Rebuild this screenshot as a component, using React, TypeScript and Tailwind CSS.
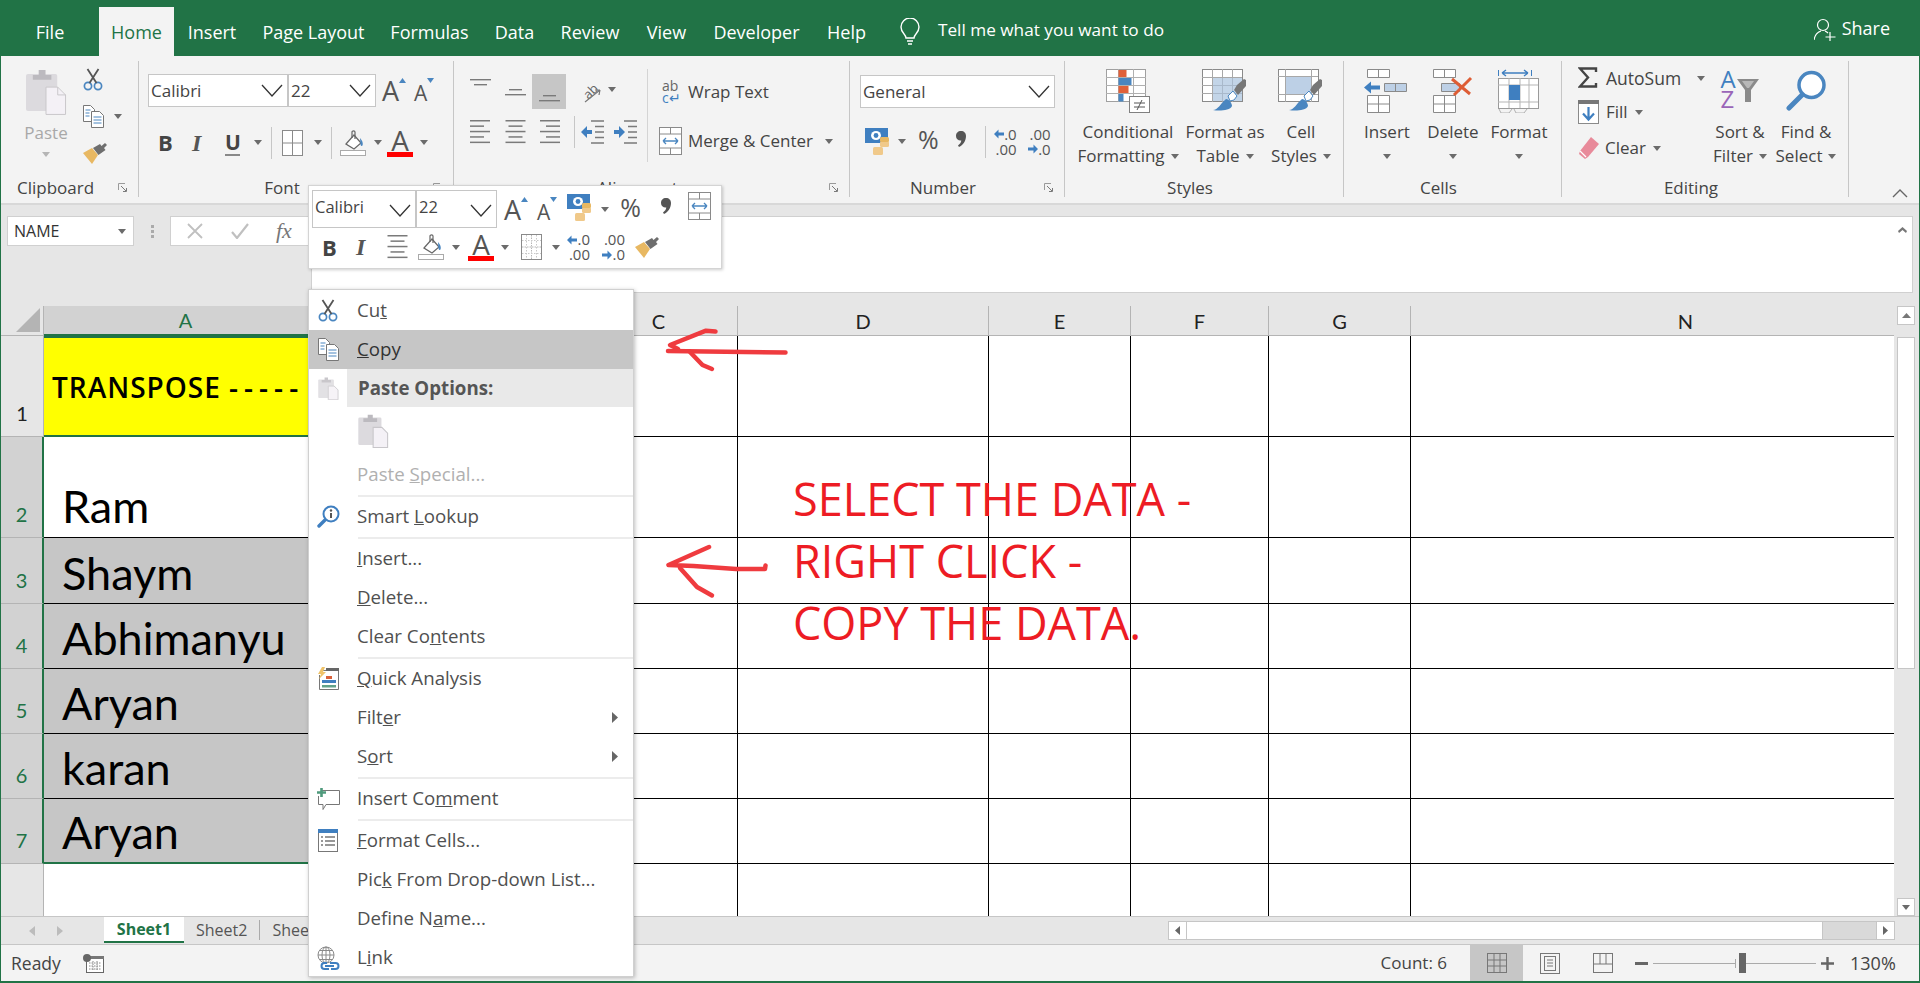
import type { ReactNode } from "react";

function Caret({ c = "#6b6b6b" }: { c?: string }) {
  return (
    <svg width="8" height="5" viewBox="0 0 8 5" className="shrink-0">
      <path d="M0 0h8L4 5z" fill={c} />
    </svg>
  );
}

function Chevron() {
  return (
    <svg width="22" height="13" viewBox="0 0 22 13" className="shrink-0">
      <path d="M1 1l10 11L21 1" fill="none" stroke="#333" strokeWidth="1.3" />
    </svg>
  );
}

function Launcher() {
  return (
    <svg width="10" height="10" viewBox="0 0 10 10" className="shrink-0">
      <path d="M.5 7V.5H7" fill="none" stroke="#9a9a9a" />
      <path d="M3 3l5 5M5 8.5h3.5V5" fill="none" stroke="#7a7a7a" />
    </svg>
  );
}

function PasteIcon() {
  return (
    <svg width="41" height="46" viewBox="0 0 42 47">
      <rect x="0" y="5" width="32" height="38" rx="2" fill="#dcdade" />
      <path d="M7 6h6V1h7v5h6v5H7z" fill="#bcbabf" />
      <path d="M20.5 18.5h12l8 8v20h-20z" fill="#f4f1f6" stroke="#c8c6ca" />
      <path d="M32.5 18.5v8h8" fill="none" stroke="#c8c6ca" />
    </svg>
  );
}

function Scissors() {
  return (
    <svg width="20" height="23" viewBox="0 0 20 23">
      <circle cx="5" cy="18" r="3.6" fill="none" stroke="#4a86c0" strokeWidth="1.7" />
      <circle cx="15" cy="18" r="3.6" fill="none" stroke="#4a86c0" strokeWidth="1.7" />
      <path d="M6.5 15L15.5 1M13.5 15L4.5 1" stroke="#555" strokeWidth="1.8" />
    </svg>
  );
}

function CopyIcon() {
  return (
    <svg width="21" height="23" viewBox="0 0 21 23">
      <path d="M.5.5h7l4 4v12H.5z" fill="#fff" stroke="#777" />
      <path d="M8.500 6.500h8l4 4v12h-12z" fill="#fff" stroke="#777" />
      <path d="M2.500 5h5M2.500 8h4M2.500 11h4M10.500 12h8M10.500 15h8M10.500 18h8" stroke="#4a86c0" />
    </svg>
  );
}

function Brush() {
  return (
    <svg width="24" height="22" viewBox="0 0 24 22">
      <path d="M0 11l9-5 6 7-6 9z" fill="#e8b862" />
      <path d="M10 6l7-4 1.500 2L22 1l2 2-3 3 1.500 2-7 5z" fill="#6e6e6e" />
    </svg>
  );
}

function GridBox({ dotted }: { dotted?: boolean }) {
  return (
    <svg width="21" height="26" viewBox="0 0 21 26">
      <rect x=".5" y=".5" width="20" height="25" fill="#fff" stroke="#8a8a8a" />
      <path
        d="M10.500 1v24M1 13h19"
        stroke={dotted ? "#b5b5b5" : "#8a8a8a"}
        strokeDasharray={dotted ? "1.5 1" : undefined}
      />
      {dotted && <path d="M1 6.500h19M5.500 1v24M15.500 1v24M1 19.500h19" stroke="#c8c8c8" strokeDasharray="1.5 1.5" />}
    </svg>
  );
}

function FillIcon() {
  return (
    <svg width="26" height="26" viewBox="0 0 26 26">
      <path d="M6 14l8-9 7 8-7 6z" fill="#fff" stroke="#666" strokeWidth="1.2" />
      <path d="M12 8V2c0-1.500 3-1.500 3 0v7" fill="none" stroke="#666" strokeWidth="1.2" />
      <path d="M20 8c3 3 3.500 7 2 8-2 .5-1.500-4-2-8z" fill="#4a86c0" />
      <rect x=".5" y="20.500" width="25" height="5" fill="#fff" stroke="#aaa" />
    </svg>
  );
}

function FontColor() {
  return (
    <div className="flex h-[28px] w-[26px] flex-col items-center">
      <span className="font-['Open_Sans'] text-[28px] leading-[23px] text-[#555]">A</span>
      <span className="mt-auto h-[7px] w-full bg-[#ff0000]" />
    </div>
  );
}

function GrowA({ up, small }: { up: boolean; small?: boolean }) {
  return (
    <div className="flex items-start">
      <span
        className={`font-['Open_Sans'] leading-none text-[#555] ${small ? "mt-[6px] text-[21px]" : "text-[27px]"}`}
      >
        A
      </span>
      <svg width="7" height="5" viewBox="0 0 7 5" className="mt-[1px]">
        <path d={up ? "M0 5h7L3.500 0z" : "M0 0h7L3.500 5z"} fill="#4a86c0" />
      </svg>
    </div>
  );
}

function AlignLines({ widths }: { widths: number[] }) {
  const h = widths.length * 5;
  return (
    <svg width="21" height={h} viewBox={`0 0 21 ${h}`}>
      {widths.map((w, i) => (
        <rect key={i} x={(21 - w) / 2} y={i * 5} width={w} height="1.4" fill="#7a7a7a" />
      ))}
    </svg>
  );
}

function AlignBlock({ kind }: { kind: "l" | "c" | "r" | "m" }) {
  const rows = kind === "m" ? [20, 14, 20, 14, 20] : [20, 14, 20, 14, 20];
  return (
    <svg width="21" height="26" viewBox="0 0 21 26">
      {rows.map((w, i) => {
        const x = kind === "l" ? 0 : kind === "r" ? 21 - w : (21 - w) / 2;
        return <rect key={i} x={x} y={i * 5.4 + 1} width={w} height="1.5" fill="#7a7a7a" />;
      })}
    </svg>
  );
}

function Indent({ inward }: { inward?: boolean }) {
  return (
    <svg width="23" height="26" viewBox="0 0 23 26">
      <path d="M10 2h13M14 7.500h9M14 13h9M14 18.500h9M10 24h13" stroke="#7a7a7a" strokeWidth="1.5" />
      {inward ? (
        <path d="M11 13L5 7v4H0v4h5v4z" fill="#3f7fc0" />
      ) : (
        <path d="M0 13l6-6v4h5v4H6v4z" fill="#3f7fc0" />
      )}
    </svg>
  );
}

function Orientation() {
  return (
    <div className="relative flex h-[26px] w-[20px] items-center justify-center">
      <span className="-rotate-45 font-['Open_Sans'] text-[13px] leading-none text-[#666]">ab</span>
      <svg width="20" height="26" viewBox="0 0 20 26" className="absolute inset-0">
        <path d="M4 24L19 12M19 12l-5 0M19 12l-1 5" stroke="#777" fill="none" strokeWidth="1.2" />
      </svg>
    </div>
  );
}

function MergeIcon() {
  return (
    <svg width="23" height="28" viewBox="0 0 23 28">
      <rect x=".5" y=".5" width="22" height="27" fill="#fff" stroke="#8a8a8a" />
      <path d="M1 7h21M1 21h21M11.500 1v6M11.500 21v6" stroke="#8a8a8a" />
      <path d="M4 14h15M4 14l3-3M4 14l3 3M19 14l-3-3M19 14l-3 3" stroke="#4a86c0" strokeWidth="1.3" fill="none" />
    </svg>
  );
}

function Currency() {
  return (
    <svg width="25" height="27" viewBox="0 0 25 27">
      <rect x="0" y="0" width="23" height="15" fill="#3f7fc0" />
      <ellipse cx="11" cy="7.500" rx="5" ry="4.500" fill="#fff" />
      <circle cx="11" cy="7.500" r="2.400" fill="#3f7fc0" />
      <rect x="15" y="13" width="9" height="6" rx="1.500" fill="#f0c98a" />
      <rect x="15" y="9" width="9" height="5" rx="1.500" fill="#e8b862" />
      <rect x="8" y="19" width="10" height="8" rx="1.500" fill="#f0c98a" />
    </svg>
  );
}

function Comma() {
  return (
    <svg width="10" height="16" viewBox="0 0 10 16">
      <path d="M5 0c3 0 5 2 5 5 0 5-3 9-7 11l-1-1.500c2-1.500 3-3 3.300-5C2.300 9.800 0 8 0 5c0-3 2-5 5-5z" fill="#555" />
    </svg>
  );
}

function Arrow({ right }: { right?: boolean }) {
  return (
    <svg width="10" height="10" viewBox="0 0 10 10" className="shrink-0" style={right ? { transform: "scaleX(-1)" } : undefined}>
      <path d="M0 5l4.500-4.500v3H10v3H4.500v3z" fill="#3f7fc0" />
    </svg>
  );
}

function Decimal({ more }: { more?: boolean }) {
  return (
    <div className="flex w-[23px] flex-col font-['Open_Sans'] text-[15px] leading-[15px] text-[#555]">
      {more ? (
        <>
          <div className="flex items-center justify-end">
            <Arrow />
            <span>.0</span>
          </div>
          <span className="text-right">.00</span>
        </>
      ) : (
        <>
          <span className="text-right">.00</span>
          <div className="flex items-center justify-end">
            <Arrow right />
            <span>.0</span>
          </div>
        </>
      )}
    </div>
  );
}

function Percent() {
  return <span className="font-['Open_Sans'] text-[25px] leading-none text-[#555]">%</span>;
}

function CondFormat() {
  return (
    <svg width="45" height="45" viewBox="0 0 45 45">
      <rect x=".5" y=".5" width="39" height="32" fill="#fff" stroke="#a0a0a0" />
      <path d="M0 8.500h40M0 16.500h40M0 24.500h40M12.500 0v33M27.500 0v33" stroke="#b0b0b0" />
      <rect x="12.500" y="1" width="8" height="7" fill="#e0613a" />
      <rect x="12.500" y="9" width="13" height="7" fill="#4a86c0" />
      <rect x="12.500" y="17" width="10" height="7" fill="#e0613a" />
      <rect x="12.500" y="25" width="5" height="7.500" fill="#4a86c0" />
      <rect x="23.500" y="27.500" width="20" height="16" fill="#fff" stroke="#808080" />
      <path d="M28 34h11M28 38h11M36 31l-5 10" stroke="#555" />
    </svg>
  );
}

function TableBrush({ full }: { full?: boolean }) {
  return (
    <svg width="46" height="44" viewBox="0 0 46 44">
      <rect x=".5" y=".5" width="40" height="32" fill="#fff" stroke="#8a8a8a" />
      {full ? (
        <>
          <path d="M0 7.500h40M7.500 0v33M33.500 0v33M0 25.500h40" stroke="#a8a8a8" />
          <rect x="8" y="8" width="25" height="17" fill="#bdd0e6" />
        </>
      ) : (
        <>
          <path d="M0 8.500h40M0 16.500h40M0 24.500h40M10.500 0v33M20.500 0v33M30.500 0v33" stroke="#a8a8a8" />
          <rect x="11" y="9" width="29" height="23" fill="#bdd0e6" opacity=".9" />
          <path d="M20.500 9v23M30.500 9v23M11 16.500h29M11 24.500h29" stroke="#a9b9cb" />
        </>
      )}
      <path d="M35 16l7-6 2 1v6l-8 9-4-5z" fill="#777" />
      <path d="M26 27l5-5 4 5-3 4-4 1z" fill="#fff" stroke="#4a86c0" />
      <path d="M11 41c5 0 7-6 13-11 3 0 6 4 6 7-2 5-14 5-19 4z" fill="#4a86c0" />
    </svg>
  );
}

function CellsIcon({ kind }: { kind: "insert" | "delete" }) {
  return (
    <svg width="46" height="44" viewBox="0 0 46 44">
      <path d="M3.500.5h22v8h-22zM14.500 0v8M3.500 26.500h22v17h-22zM3.500 35h22M14.500 26v17" fill="#fff" stroke="#8a8a8a" />
      {kind === "insert" ? (
        <>
          <path d="M20.500 14.500h22v8h-22z" fill="#bdd0e6" stroke="#8a8a8a" />
          <path d="M31.500 14v9" stroke="#8a8a8a" />
          <path d="M0 18.500l7-6v4h9v4H7v4z" fill="#3f7fc0" />
        </>
      ) : (
        <>
          <path d="M11.500 14.500h18v8h-18z" fill="#bdd0e6" stroke="#8a8a8a" />
          <path d="M22 10l18 15M41 9L24 26" stroke="#de5d35" strokeWidth="3" />
        </>
      )}
    </svg>
  );
}

function FormatCellsIcon() {
  return (
    <svg width="42" height="44" viewBox="0 0 42 44">
      <path d="M.5 1v6M33.500 1v6" stroke="#3f7fc0" />
      <path d="M4 4h26M4 4l4-3M4 4l4 3M30 4l-4-3M30 4l-4 3" stroke="#3f7fc0" strokeWidth="1.4" fill="none" />
      <rect x=".5" y="9.500" width="40" height="30" fill="#fff" stroke="#9a9a9a" />
      <path d="M0 16h40M0 33h40M11 9v30M22 9v30M31 9v30" stroke="#b5b5b5" />
      <rect x="11" y="16" width="11" height="15" fill="#3f7fc0" />
      <path d="M1 40l2 4h8l3-4M16 40l2 4h8l3-4" fill="none" stroke="#b0b0b0" />
    </svg>
  );
}

function StackBtn({ icon, l1, l2, w }: { icon: ReactNode; l1: string; l2?: string; w: string }) {
  return (
    <div className={`flex flex-col items-center ${w}`}>
      <div className="flex h-[59px] justify-center pt-[8px]">{icon}</div>
      <span className="block whitespace-nowrap text-center leading-[24px]">{l1}</span>
      {l2 ? (
        <div className="flex h-[24px] items-center justify-center gap-[6px]">
          <span>{l2}</span>
          <Caret />
        </div>
      ) : (
        <div className="flex h-[24px] items-center justify-center">
          <Caret />
        </div>
      )}
    </div>
  );
}

function Group({ w, label, launcher, children }: { w: string; label: string; launcher?: boolean; children: ReactNode }) {
  return (
    <div className={`my-[5px] flex h-[136px] shrink-0 flex-col border-r border-[#c6c6c6] ${w}`}>
      <div className="h-[117px] overflow-hidden">{children}</div>
      <div className="flex h-[19px] items-center">
        <span className="flex-1 text-center text-[#444]">{label}</span>
        <span className="flex w-[28px] justify-start pl-[8px]">{launcher && <Launcher />}</span>
      </div>
    </div>
  );
}

function Combo({ w, text }: { w: string; text: string }) {
  return (
    <div className={`flex h-[33px] items-center justify-between border border-[#c6c6c6] bg-white pl-[2px] pr-[4px] ${w}`}>
      <span className="text-[#444]">{text}</span>
      <Chevron />
    </div>
  );
}

function Ribbon() {
  return (
    <div className="flex h-[147px] bg-[#f3f3f3] text-[#444]">
      <Group w="w-[138px]" label="Clipboard" launcher>
        <div className="flex">
          <div className="ml-[24px] flex w-[42px] flex-col items-center pt-[8px] text-[#a8a8a8]">
            <PasteIcon />
            <span className="mt-[6px] leading-[24px]">Paste</span>
            <div className="mt-[7px]">
              <Caret c="#b5b5b5" />
            </div>
          </div>
          <div className="ml-[16px] flex flex-col pt-[7px]">
            <Scissors />
            <div className="mt-[14px] flex items-center">
              <CopyIcon />
              <span className="ml-[10px]">
                <Caret />
              </span>
            </div>
            <div className="mt-[14px]">
              <Brush />
            </div>
          </div>
        </div>
      </Group>

      <Group w="w-[315px]" label="Font" launcher>
        <div className="flex items-center pl-[9px] pt-[13px]">
          <Combo w="w-[140px]" text="Calibri" />
          <Combo w="w-[88px]" text="22" />
          <span className="ml-[6px]">
            <GrowA up />
          </span>
          <span className="ml-[8px]">
            <GrowA up={false} small />
          </span>
        </div>
        <div className="mt-[19px] flex h-[33px] items-center pl-[19px]">
          <span className="w-[14px] font-['Open_Sans'] text-[22px] font-bold text-[#444]">B</span>
          <span className="ml-[20px] w-[12px] font-['Liberation_Serif'] text-[24px] font-bold italic text-[#555]">I</span>
          <span className="ml-[21px] w-[15px] border-b-2 border-[#888] font-['Open_Sans'] text-[21px] font-bold leading-[24px] text-[#444]">U</span>
          <span className="ml-[14px]">
            <Caret />
          </span>
          <span className="ml-[9px] h-[32px] w-px bg-[#c6c6c6]" />
          <span className="ml-[10px]">
            <GridBox />
          </span>
          <span className="ml-[11px]">
            <Caret />
          </span>
          <span className="ml-[9px] h-[32px] w-px bg-[#c6c6c6]" />
          <span className="ml-[8px]">
            <FillIcon />
          </span>
          <span className="ml-[8px]">
            <Caret />
          </span>
          <span className="ml-[5px]">
            <FontColor />
          </span>
          <span className="ml-[7px]">
            <Caret />
          </span>
        </div>
      </Group>

      <Group w="w-[396px]" label="Alignment" launcher>
        <div className="flex">
          <div className="mt-[8px] h-[93px] w-[194px] border-r border-[#d4d4d4]">
            <div className="flex h-[40px] items-start pl-[16px]">
              <span className="mt-[10px]">
                <AlignLines widths={[21, 13]} />
              </span>
              <span className="ml-[14px] mt-[20px]">
                <AlignLines widths={[13, 21]} />
              </span>
              <span className="ml-[6px] mt-[5px] flex h-[35px] w-[34px] items-end justify-center bg-[#c6c6c6] pb-[4px]">
                <AlignLines widths={[13, 21]} />
              </span>
              <span className="ml-[15px] mt-[9px]">
                <Orientation />
              </span>
              <span className="ml-[7px] mt-[18px]">
                <Caret />
              </span>
            </div>
            <div className="mt-[6px] flex h-[33px] items-center pl-[16px]">
              <AlignBlock kind="l" />
              <span className="ml-[14px]">
                <AlignBlock kind="c" />
              </span>
              <span className="ml-[13px]">
                <AlignBlock kind="r" />
              </span>
              <span className="ml-[14px] h-[32px] w-px bg-[#c6c6c6]" />
              <span className="ml-[6px]">
                <Indent />
              </span>
              <span className="ml-[10px]">
                <Indent inward />
              </span>
            </div>
          </div>
          <div className="flex flex-col pl-[11px] pt-[13px]">
            <div className="flex h-[36px] items-center">
              <div className="flex w-[29px] flex-col pl-[3px] font-['Open_Sans'] text-[14px] leading-[12px] text-[#666]">
                <span>ab</span>
                <span className="text-[#3f7fc0]">c↵</span>
              </div>
              <span>Wrap Text</span>
            </div>
            <div className="mt-[13px] flex h-[36px] items-center">
              <MergeIcon />
              <span className="ml-[6px]">Merge &amp; Center</span>
              <span className="ml-[12px]">
                <Caret />
              </span>
            </div>
          </div>
        </div>
      </Group>

      <Group w="w-[215px]" label="Number" launcher>
        <div className="pl-[10px] pt-[14px]">
          <div className="flex h-[33px] w-[195px] items-center justify-between border border-[#c6c6c6] bg-white pl-[2px] pr-[4px]">
            <span>General</span>
            <Chevron />
          </div>
          <div className="mt-[17px] flex h-[33px] items-center pl-[5px]">
            <Currency />
            <span className="ml-[8px]">
              <Caret />
            </span>
            <span className="ml-[12px]">
              <Percent />
            </span>
            <span className="ml-[17px] -mt-[6px]">
              <Comma />
            </span>
            <span className="ml-[19px] h-[32px] w-px bg-[#c6c6c6]" />
            <span className="ml-[8px]">
              <Decimal more />
            </span>
            <span className="ml-[11px]">
              <Decimal />
            </span>
          </div>
        </div>
      </Group>

      <Group w="w-[279px]" label="Styles">
        <div className="flex pl-[5px]">
          <StackBtn w="w-[116px]" icon={<CondFormat />} l1="Conditional" l2="Formatting" />
          <StackBtn w="w-[78px]" icon={<TableBrush />} l1="Format as" l2="Table" />
          <StackBtn w="w-[74px]" icon={<TableBrush full />} l1="Cell" l2="Styles" />
        </div>
      </Group>

      <Group w="w-[218px]" label="Cells">
        <div className="flex pl-[11px]">
          <StackBtn w="w-[64px]" icon={<CellsIcon kind="insert" />} l1="Insert" />
          <StackBtn w="w-[68px]" icon={<CellsIcon kind="delete" />} l1="Delete" />
          <StackBtn w="w-[64px]" icon={<FormatCellsIcon />} l1="Format" />
        </div>
      </Group>

      <Group w="w-[287px]" label="Editing">
        <div className="flex">
          <div className="flex w-[145px] flex-col pl-[16px]">
            <div className="flex h-[34px] items-center">
              <svg width="20" height="22" viewBox="0 0 20 22">
                <path d="M18 5V1.500H2l8 9-8 9h16V16" fill="none" stroke="#444" strokeWidth="2.4" />
              </svg>
              <span className="ml-[8px] text-[17.5px]">AutoSum</span>
              <span className="ml-[16px]">
                <Caret />
              </span>
            </div>
            <div className="flex h-[34px] items-center">
              <svg width="21" height="24" viewBox="0 0 21 24">
                <rect x=".5" y=".5" width="20" height="23" fill="#fff" stroke="#8a8a8a" />
                <rect x="0" y="0" width="21" height="4" fill="#777" />
                <path d="M10.500 7v12M5 13.500l5.500 6 5.500-6" stroke="#3f7fc0" strokeWidth="2.2" fill="none" />
              </svg>
              <span className="ml-[7px]">Fill</span>
              <span className="ml-[7px]">
                <Caret />
              </span>
            </div>
            <div className="flex h-[38px] items-center">
              <svg width="21" height="22" viewBox="0 0 21 22">
                <path d="M13 0l8 7-11 13-3 2-6-5 1-3z" fill="#e88a9a" />
                <path d="M2 14l6 6" stroke="#fff" strokeWidth="1.2" />
              </svg>
              <span className="ml-[6px]">Clear</span>
              <span className="ml-[7px]">
                <Caret />
              </span>
            </div>
          </div>
          <StackBtn
            w="w-[66px]"
            icon={
              <div className="flex">
                <div className="flex flex-col font-['Open_Sans'] text-[24px] font-normal leading-[20px]">
                  <span className="text-[#3f7fc0]">A</span>
                  <span className="text-[#9a65b8]">Z</span>
                </div>
                <svg width="24" height="26" viewBox="0 0 24 26" className="mt-[9px]">
                  <path d="M1 1h22l-8 11v12h-6V12z" fill="#8a8a8a" />
                  <path d="M6 3h12l-5 7h-2z" fill="#b8b8b8" />
                </svg>
              </div>
            }
            l1="Sort &"
            l2="Filter"
          />
          <StackBtn
            w="w-[66px]"
            icon={
              <svg width="40" height="42" viewBox="0 0 40 42" className="mt-px">
                <circle cx="25.500" cy="15" r="12.500" fill="#fff" stroke="#4a86c0" strokeWidth="3.500" />
                <path d="M16 25L3 38" stroke="#4a86c0" strokeWidth="5" strokeLinecap="round" />
              </svg>
            }
            l1="Find &"
            l2="Select"
          />
        </div>
      </Group>

      <div className="flex flex-1 items-end justify-end pb-[5px] pr-[11px]">
        <svg width="16" height="9" viewBox="0 0 16 9">
          <path d="M1 8l7-7 7 7" fill="none" stroke="#666" strokeWidth="1.4" />
        </svg>
      </div>
    </div>
  );
}

function FormulaBar() {
  return (
    <div className="flex h-[103px] border-t-2 border-[#d8d8d8] bg-[#e6e6e6] pt-[11px] text-[#444]">
      <div className="ml-[6px] flex h-[30px] w-[127px] items-center justify-between border border-[#d0d0d0] bg-white pl-[6px] pr-[7px] text-[16px] text-[#333]">
        <span>NAME</span>
        <Caret />
      </div>
      <div className="ml-[17px] mr-[16px] flex h-[30px] flex-col justify-center gap-[2px]">
        <span className="h-[3px] w-[3px] bg-[#aaa]" />
        <span className="h-[3px] w-[3px] bg-[#aaa]" />
        <span className="h-[3px] w-[3px] bg-[#aaa]" />
      </div>
      <div className="flex h-[30px] w-[141px] shrink-0 items-center border border-[#d0d0d0] bg-white pl-[16px]">
        <svg width="16" height="16" viewBox="0 0 16 16">
          <path d="M1 1l14 14M15 1L1 15" stroke="#c0c0c0" strokeWidth="1.8" />
        </svg>
        <svg width="18" height="16" viewBox="0 0 18 16" className="ml-[28px]">
          <path d="M1 9l5 6L17 1" stroke="#c0c0c0" strokeWidth="2.2" fill="none" />
        </svg>
        <span className="ml-[27px] font-['Liberation_Serif'] text-[22px] italic leading-none text-[#777]">fx</span>
      </div>
      <div className="flex h-[77px] flex-1 justify-end border border-[#d0d0d0] bg-white pr-[5px] pt-[10px]">
        <svg width="9" height="6" viewBox="0 0 9 6">
          <path d="M4.500 0L9 4 8 6 4.500 3 1 6 0 4z" fill="#777" />
        </svg>
      </div>
      <div className="w-[6px]" />
    </div>
  );
}

const colNames = ["A", "B", "C", "D", "E", "F", "G", "N"];
const rows: { n: number; name?: string }[] = [
  { n: 1 },
  { n: 2, name: "Ram" },
  { n: 3, name: "Shaym" },
  { n: 4, name: "Abhimanyu" },
  { n: 5, name: "Aryan" },
  { n: 6, name: "karan" },
  { n: 7, name: "Aryan" },
  { n: 8 },
];

function SheetGrid() {
  return (
    <div className="grid h-[610px] w-[1893px] shrink-0 grid-cols-[43px_284px_252px_158px_251px_142px_138px_142px_550px] grid-rows-[30px_101px_101px_66px_65px_65px_65px_65px_65px] overflow-hidden bg-white font-['Lato']">
      <div className="flex items-end justify-end border-b border-r border-[#b4b4b4] bg-[#e6e6e6] pb-[3px] pr-[3px]">
        <svg width="24" height="24" viewBox="0 0 24 24">
          <path d="M24 0v24H0z" fill="#b4b4b4" />
        </svg>
      </div>
      {colNames.map((c) => (
        <div
          key={c}
          className={
            c === "A"
              ? "flex items-center justify-center border-b-2 border-r border-b-[#217346] border-r-[#b4b4b4] bg-[#d2d2d2] text-[20px] text-[#217346]"
              : "flex items-center justify-center border-b border-r border-[#b4b4b4] bg-[#e6e6e6] text-[20px] text-[#222]"
          }
        >
          {c}
        </div>
      ))}
      {rows.map((r) => {
        const selected = r.n >= 2 && r.n <= 7;
        return [
          <div
            key={`h${r.n}`}
            className={
              selected
                ? "flex items-end justify-center border-b border-r-2 border-b-[#b4b4b4] border-r-[#217346] bg-[#d2d2d2] pb-[11px] text-[20px] leading-[24px] text-[#217346]"
                : "flex items-end justify-center border-b border-r border-[#b4b4b4] bg-[#e6e6e6] pb-[11px] text-[20px] leading-[24px] text-[#222]"
            }
          >
            {r.n <= 7 ? r.n : ""}
          </div>,
          <div
            key={`a${r.n}`}
            className={
              r.n === 1
                ? "flex items-center whitespace-pre border-y-2 border-[#217346] bg-[#ffff00] pl-[8px] font-['Open_Sans'] text-[28px] font-semibold tracking-[1px] text-black"
                : r.n === 2
                  ? "flex items-end border-b border-black bg-white pb-[5px] pl-[18px] text-[45px] leading-[52px] text-black"
                  : r.n === 7
                    ? "flex items-end border-b-2 border-[#217346] bg-[#c6c6c6] pb-[4px] pl-[18px] text-[45px] leading-[52px] text-black"
                    : selected
                      ? "flex items-end border-b border-black bg-[#c6c6c6] pb-[4px] pl-[18px] text-[45px] leading-[52px] text-black"
                      : "border-b border-black bg-white"
            }
          >
            {r.n === 1 ? (
              <>
                TRANSPOSE <span className="tracking-[6px]">-----</span>
              </>
            ) : (
              r.name
            )}
          </div>,
          ...["B", "C", "D", "E", "F", "G", "N"].map((c) => (
            <div key={`${c}${r.n}`} className="border-b border-r border-black bg-white" />
          )),
        ];
      })}
    </div>
  );
}

function VScroll() {
  return (
    <div className="ml-[3px] flex h-[610px] w-[18px] shrink-0 flex-col bg-[#e6e6e6]">
      <div className="flex h-[19px] items-center justify-center border border-[#c6c6c6] bg-white">
        <svg width="9" height="5" viewBox="0 0 9 5">
          <path d="M0 5h9L4.500 0z" fill="#777" />
        </svg>
      </div>
      <div className="mt-[12px] h-[332px] border border-[#c6c6c6] bg-white" />
      <div className="flex-1" />
      <div className="flex h-[18px] items-center justify-center border border-[#c6c6c6] bg-white">
        <Caret />
      </div>
    </div>
  );
}

function TabBar() {
  return (
    <div className="flex h-[29px] border-y border-[#c6c6c6] bg-[#e6e6e6] text-[16px] text-[#555]">
      <div className="flex w-[103px] items-center pl-[28px]">
        <svg width="6" height="10" viewBox="0 0 6 10">
          <path d="M6 0v10L0 5z" fill="#bcbcbc" />
        </svg>
        <svg width="6" height="10" viewBox="0 0 6 10" className="ml-[22px]">
          <path d="M0 0v10l6-5z" fill="#bcbcbc" />
        </svg>
      </div>
      <div className="flex h-[26px] w-[80px] items-center justify-center border-b-2 border-[#217346] bg-white font-bold text-[#217346]">
        Sheet1
      </div>
      <span className="ml-[12px] flex h-[26px] items-center">Sheet2</span>
      <span className="ml-[12px] mt-[3px] h-[20px] w-px bg-[#aaa]" />
      <span className="ml-[12px] flex h-[26px] items-center">Sheet3</span>
      <div className="ml-auto mt-[4px] flex h-[19px] w-[727px] border border-[#c6c6c6] bg-[#d9d9d9]">
        <div className="flex w-[18px] items-center justify-center border-r border-[#c6c6c6] bg-white">
          <svg width="5" height="9" viewBox="0 0 5 9">
            <path d="M5 0v9L0 4.500z" fill="#666" />
          </svg>
        </div>
        <div className="w-[636px] border-r border-[#c6c6c6] bg-white" />
        <div className="flex-1" />
        <div className="flex w-[18px] items-center justify-center border-l border-[#c6c6c6] bg-white">
          <svg width="5" height="9" viewBox="0 0 5 9">
            <path d="M0 0v9l5-4.500z" fill="#666" />
          </svg>
        </div>
      </div>
      <div className="w-[24px]" />
    </div>
  );
}

function StatusBar() {
  return (
    <div className="flex h-[36px] items-center bg-[#f3f3f3] text-[#444]">
      <span className="ml-[10px] w-[72px] text-[17.5px]">Ready</span>
      <svg width="21" height="19" viewBox="0 0 21 19">
        <rect x="3.500" y="3.500" width="17" height="15" fill="#fff" stroke="#666" />
        <path d="M6 9h12M6 12h12M6 15h12M10 7v10M14 7v10" stroke="#888" strokeDasharray="1.5 1" />
        <rect x="4" y="2" width="17" height="3" fill="#777" />
        <circle cx="4" cy="4" r="4" fill="#666" />
      </svg>
      <span className="ml-auto">Count: 6</span>
      <div className="ml-[23px] flex h-[36px] w-[53px] items-center justify-center bg-[#c6c6c6]">
        <svg width="20" height="20" viewBox="0 0 20 20">
          <rect x=".5" y=".5" width="19" height="19" fill="none" stroke="#777" />
          <path d="M7 0v20M13 0v20M0 7h20M0 13h20" stroke="#777" />
        </svg>
      </div>
      <svg width="20" height="21" viewBox="0 0 20 21" className="ml-[17px]">
        <rect x=".5" y=".5" width="19" height="20" fill="none" stroke="#777" />
        <rect x="4.500" y="3.500" width="11" height="14" fill="none" stroke="#777" />
        <path d="M7 7h6M7 10h6M7 13h6" stroke="#777" />
      </svg>
      <svg width="20" height="20" viewBox="0 0 20 20" className="ml-[33px]">
        <rect x=".5" y=".5" width="19" height="19" fill="none" stroke="#777" />
        <path d="M7 0v11h6V0M0 11h7M13 11h7" fill="none" stroke="#777" />
      </svg>
      <span className="ml-[22px] h-[3px] w-[13px] bg-[#666]" />
      <div className="ml-[5px] flex h-[20px] w-[163px] items-center">
        <span className="h-px w-[82px] bg-[#aaa]" />
        <span className="h-[9px] w-px bg-[#aaa]" />
        <span className="ml-[3px] h-[20px] w-[7px] bg-[#666]" />
        <span className="h-px flex-1 bg-[#aaa]" />
      </div>
      <svg width="13" height="13" viewBox="0 0 13 13" className="ml-[5px]">
        <path d="M0 6.500h13M6.500 0v13" stroke="#666" strokeWidth="2.4" />
      </svg>
      <span className="ml-[16px] w-[49px] whitespace-nowrap text-[18px]">130%</span>
      <span className="w-[20px]" />
    </div>
  );
}

function MiniToolbar() {
  return (
    <div className="absolute left-[308px] top-[185px] z-20 h-[84px] w-[414px] border border-[#d4d4d4] bg-white pl-[3px] pt-[4px] text-[16.5px] text-[#444] shadow-[1px_1px_3px_rgba(0,0,0,0.2)]">
      <div className="flex h-[38px] items-center">
        <div className="flex h-[38px] w-[104px] items-center justify-between border border-[#c6c6c6] pb-[4px] pl-[2px] pr-[4px]">
          <span>Calibri</span>
          <span className="mt-[6px]">
            <Chevron />
          </span>
        </div>
        <div className="flex h-[38px] w-[81px] items-center justify-between border border-[#c6c6c6] pb-[4px] pl-[2px] pr-[4px]">
          <span>22</span>
          <span className="mt-[6px]">
            <Chevron />
          </span>
        </div>
        <span className="ml-[7px]">
          <GrowA up />
        </span>
        <span className="ml-[9px]">
          <GrowA up={false} small />
        </span>
        <span className="ml-[10px] -mt-[4px]">
          <Currency />
        </span>
        <span className="ml-[9px]">
          <Caret />
        </span>
        <span className="ml-[11px]">
          <Percent />
        </span>
        <span className="ml-[20px] -mt-[6px]">
          <Comma />
        </span>
        <span className="ml-[17px] -mt-[6px]">
          <MergeIcon />
        </span>
      </div>
      <div className="mt-[1px] flex h-[36px] items-center pl-[10px]">
        <span className="w-[14px] font-['Open_Sans'] text-[22px] font-bold text-[#444]">B</span>
        <span className="ml-[20px] w-[12px] font-['Liberation_Serif'] text-[24px] font-bold italic text-[#555]">I</span>
        <span className="ml-[19px]">
          <AlignBlock kind="m" />
        </span>
        <span className="ml-[10px]">
          <FillIcon />
        </span>
        <span className="ml-[8px]">
          <Caret />
        </span>
        <span className="ml-[8px]">
          <FontColor />
        </span>
        <span className="ml-[7px]">
          <Caret />
        </span>
        <span className="ml-[12px]">
          <GridBox dotted />
        </span>
        <span className="ml-[10px]">
          <Caret />
        </span>
        <span className="ml-[7px]">
          <Decimal more />
        </span>
        <span className="ml-[12px]">
          <Decimal />
        </span>
        <span className="ml-[10px]">
          <Brush />
        </span>
      </div>
    </div>
  );
}

function MenuItem({ icon, children, more, className = "" }: { icon?: ReactNode; children: ReactNode; more?: boolean; className?: string }) {
  return (
    <div className={`flex h-[39px] items-center ${className}`}>
      <span className="flex w-[38px] justify-center">{icon}</span>
      <span className="ml-[10px] flex-1 whitespace-nowrap">{children}</span>
      {more && (
        <svg width="6" height="11" viewBox="0 0 6 11" className="mr-[15px]">
          <path d="M0 0v11l6-5.500z" fill="#666" />
        </svg>
      )}
    </div>
  );
}

function Sep() {
  return (
    <div className="flex h-[3px] items-center pl-[49px]">
      <span className="h-[2px] w-full bg-[#ececec]" />
    </div>
  );
}

function ContextMenu() {
  return (
    <div className="absolute left-[308px] top-[289px] z-10 h-[688px] w-[326px] border border-[#d0d0d0] bg-white pt-px text-[18.7px] text-[#505050] shadow-[1px_1px_4px_rgba(0,0,0,0.25)]">
      <MenuItem icon={<Scissors />}>
        Cu<u>t</u>
      </MenuItem>
      <MenuItem icon={<CopyIcon />} className="bg-[#c6c6c6] text-[#333]">
        <u>C</u>opy
      </MenuItem>
      <div className="flex h-[38px]">
        <span className="flex w-[38px] items-center justify-center opacity-80">
          <svg width="21" height="23" viewBox="0 0 42 47">
            <rect x="0" y="5" width="32" height="38" rx="2" fill="#dcdade" />
            <path d="M7 6h6V1h7v5h6v5H7z" fill="#bcbabf" />
            <path d="M20.500 18.500h12l8 8v20h-20z" fill="#f4f1f6" stroke="#c8c6ca" strokeWidth="2" />
          </svg>
        </span>
        <span className="flex flex-1 items-center bg-[#e9e9e9] pl-[11px] font-bold text-[#555]">Paste Options:</span>
      </div>
      <div className="flex h-[48px] items-center pl-[49px]">
        <svg width="31" height="34" viewBox="0 0 42 47">
          <rect x="0" y="5" width="32" height="38" rx="2" fill="#dcdade" />
          <path d="M7 6h6V1h7v5h6v5H7z" fill="#bcbabf" />
          <path d="M20.500 18.500h12l8 8v20h-20z" fill="#f4f1f6" stroke="#c8c6ca" strokeWidth="1.5" />
        </svg>
      </div>
      <MenuItem className="text-[#b0b0b0]">
        Paste <u>S</u>pecial...
      </MenuItem>
      <Sep />
      <MenuItem
        icon={
          <svg width="23" height="23" viewBox="0 0 23 23">
            <circle cx="14" cy="9" r="7.500" fill="#fff" stroke="#3f7fc0" strokeWidth="2" />
            <path d="M8 15l-6 6" stroke="#3f7fc0" strokeWidth="3.400" strokeLinecap="round" />
            <circle cx="14" cy="5.500" r="1.200" fill="#555" />
            <path d="M14 8v5" stroke="#555" strokeWidth="2" />
          </svg>
        }
      >
        Smart <u>L</u>ookup
      </MenuItem>
      <Sep />
      <MenuItem>
        <u>I</u>nsert...
      </MenuItem>
      <MenuItem>
        <u>D</u>elete...
      </MenuItem>
      <MenuItem>
        Clear Co<u>n</u>tents
      </MenuItem>
      <Sep />
      <MenuItem
        icon={
          <svg width="22" height="23" viewBox="0 0 22 23">
            <path d="M4.500 3.500h17v19h-19V8" fill="#fff" stroke="#777" />
            <rect x="9" y="1" width="13" height="3" fill="#666" />
            <path d="M5 0L1 7h3L2 12l7-7H6l2-5z" fill="#efc36a" />
            <rect x="9" y="9" width="6" height="3" fill="#d9603a" />
            <rect x="5" y="13" width="14" height="3" fill="#3f7fc0" />
            <rect x="5" y="18" width="14" height="2.500" fill="#62a28a" />
          </svg>
        }
      >
        <u>Q</u>uick Analysis
      </MenuItem>
      <MenuItem more>
        Filt<u>e</u>r
      </MenuItem>
      <MenuItem more>
        S<u>o</u>rt
      </MenuItem>
      <Sep />
      <MenuItem
        icon={
          <svg width="23" height="22" viewBox="0 0 23 22">
            <path d="M5 2.500h17.500v14H9l-3 5v-5H1.500V8" fill="#fff" stroke="#777" />
            <path d="M4.500 0v9M0 4.500h9" stroke="#4f9a7c" strokeWidth="2.600" />
          </svg>
        }
      >
        Insert Co<u>m</u>ment
      </MenuItem>
      <Sep />
      <MenuItem
        icon={
          <svg width="20" height="23" viewBox="0 0 20 23">
            <rect x=".5" y=".5" width="19" height="22" fill="#fff" stroke="#777" />
            <rect x="0" y="0" width="20" height="4" fill="#3f7fc0" />
            <path d="M3 8h2M7 8h10M3 12h2M7 12h10M3 16h2M7 16h10" stroke="#777" strokeWidth="1.4" />
          </svg>
        }
      >
        <u>F</u>ormat Cells...
      </MenuItem>
      <MenuItem>
        Pic<u>k</u> From Drop-down List...
      </MenuItem>
      <MenuItem>
        Define N<u>a</u>me...
      </MenuItem>
      <MenuItem
        icon={
          <svg width="23" height="24" viewBox="0 0 23 24">
            <circle cx="9" cy="9" r="8" fill="#fff" stroke="#8a8a8a" />
            <path d="M1 9h16M9 1v16M3 4.500h12M3 13.500h12" stroke="#8a8a8a" />
            <ellipse cx="9" cy="9" rx="4" ry="8" fill="none" stroke="#8a8a8a" />
            <path d="M10 17h-2.500a3 3 0 000 6H12M13 17h5.500a3 3 0 010 6H14M8 20h9" fill="none" stroke="#3f7fc0" strokeWidth="2" />
          </svg>
        }
      >
        L<u>i</u>nk
      </MenuItem>
    </div>
  );
}

function Annotations() {
  return (
    <>
      <svg width="1920" height="983" viewBox="0 0 1920 983" className="pointer-events-none absolute left-0 top-0">
        <g fill="none" stroke="#ef3b3f" strokeWidth="4.500" strokeLinecap="round" strokeLinejoin="round">
          <path d="M715.500 331.500l-9.500-.8L670 345l8 4" />
          <path d="M668 351l117.500 1.500" />
          <path d="M690 352l12.500 13 9.500 4" />
          <path d="M709 547l-40.500 18 25 1 42.500 3h29l.5-3.500" />
          <path d="M680 568l17 19 15 8.500" />
        </g>
      </svg>
      <div className="pointer-events-none absolute left-[793px] top-[468px] whitespace-pre font-['Open_Sans'] text-[45px] font-normal leading-[62px] text-[#ed1c24]">
        {"SELECT THE DATA -\nRIGHT CLICK -\nCOPY THE DATA."}
      </div>
    </>
  );
}

const tabs = [
  { t: "Insert", w: "w-[76px]" },
  { t: "Page Layout", w: "w-[127px]" },
  { t: "Formulas", w: "w-[105px]" },
  { t: "Data", w: "w-[65px]" },
  { t: "Review", w: "w-[86px]" },
  { t: "View", w: "w-[67px]" },
  { t: "Developer", w: "w-[113px]" },
  { t: "Help", w: "w-[67px]" },
];

export default function App() {
  return (
    <div className="relative h-[983px] w-[1920px] overflow-hidden font-['Open_Sans'] text-[17px]">
      <div className="flex h-full flex-col bg-[#217346] px-px pb-[2px]">
        <div className="flex h-[56px] shrink-0 items-end text-[18px] text-white">
          <div className="flex h-[49px] w-[98px] items-center justify-center pt-[2px]">File</div>
          <div className="flex h-[49px] w-[75px] items-center justify-center bg-[#f3f3f3] pt-[2px] text-[#217346]">Home</div>
          {tabs.map((x) => (
            <div key={x.t} className={`flex h-[49px] items-center justify-center pt-[2px] ${x.w}`}>
              {x.t}
            </div>
          ))}
          <div className="ml-[20px] flex h-[56px] items-center">
            <svg width="20" height="27" viewBox="0 0 20 27" className="mt-[6px]">
              <path
                d="M6 20c0-4-5-5-5-11a9 9 0 0118 0c0 6-5 7-5 11zM7 23h6M8 26h4"
                fill="none"
                stroke="#fff"
                strokeWidth="1.4"
              />
            </svg>
            <span className="ml-[18px] mt-[3px] text-[17.2px]">Tell me what you want to do</span>
          </div>
          <div className="ml-auto mr-[29px] flex h-[56px] items-center">
            <svg width="22" height="24" viewBox="0 0 22 24" className="mt-[3px]">
              <circle cx="9" cy="7" r="5.500" fill="none" stroke="#fff" strokeWidth="1.2" />
              <path d="M0 22c1-6 4-8 7-9M11 13c1 .5 2 1 3 2M16 14v9M11.500 19h10" fill="none" stroke="#fff" strokeWidth="1.2" />
            </svg>
            <span className="ml-[6px]">Share</span>
          </div>
        </div>
        <Ribbon />
        <FormulaBar />
        <div className="flex bg-[#e6e6e6]">
          <SheetGrid />
          <VScroll />
        </div>
        <TabBar />
        <StatusBar />
      </div>
      <Annotations />
      <MiniToolbar />
      <ContextMenu />
    </div>
  );
}
